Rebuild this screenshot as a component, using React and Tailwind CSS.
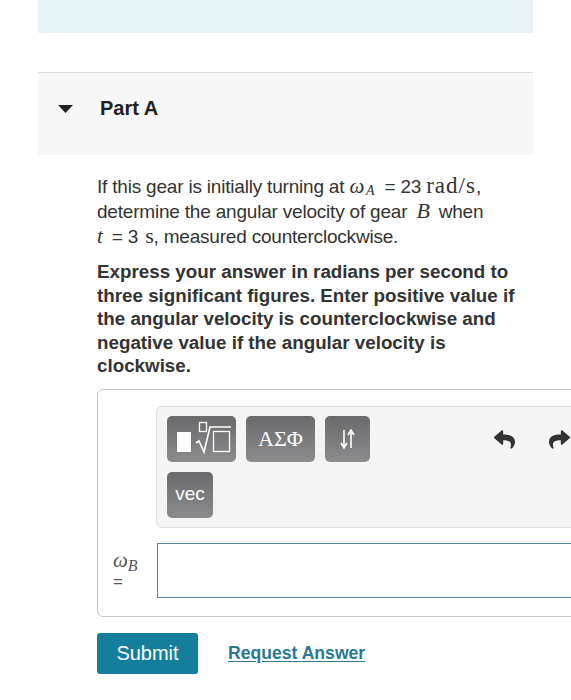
import { FaReply, FaShare } from 'react-icons/fa'

const serif = { fontFamily: '"Liberation Serif", "DejaVu Serif", serif' }

function RootIcon() {
  return (
    <svg width="69" height="46" viewBox="0 0 69 46">
      <rect x="10" y="16" width="14" height="20" fill="#fff" />
      <rect x="32.5" y="6.5" width="7" height="9" fill="none" stroke="#fff" strokeWidth="1.3" />
      <path d="M29 27 L32 25 L37 36 L43 11 L64 11" fill="none" stroke="#fff" strokeWidth="1.6" />
      <rect x="46.5" y="15.5" width="16" height="20" fill="none" stroke="#fff" strokeWidth="1.3" />
    </svg>
  )
}

function SwapIcon() {
  return (
    <svg width="16" height="24" viewBox="0 0 16 24">
      <path d="M4 3 L4 20 M1 16 L4 21 L7 16" fill="none" stroke="#fff" strokeWidth="1.6" />
      <path d="M11 21 L11 4 M8 8 L11 3 L14 8" fill="none" stroke="#fff" strokeWidth="1.6" />
    </svg>
  )
}

function ToolButton({ className, children }) {
  return (
    <div
      className={`flex h-[46px] items-center justify-center rounded-[5px] bg-gradient-to-b from-[#6a6a6c] to-[#8c8c8f] text-white ${className}`}
    >
      {children}
    </div>
  )
}

export default function App() {
  return (
    <div className="w-[571px] h-[700px] overflow-hidden bg-white text-[#333]" style={{ fontFamily: '"Liberation Sans", Arial, sans-serif' }}>
      <div className="ml-[38px] w-[495px]">
        <div className="h-[33px] bg-[#e6f4f5]" />
        <div className="mt-[39px] flex h-[83px] items-start border-t border-[#dedede] bg-[#f7f7f7] pt-[22px]">
          <svg width="15" height="8" viewBox="0 0 15 8" className="ml-[20px] mt-[10px]">
            <path d="M0 0 L15 0 L7.5 8 Z" fill="#222" />
          </svg>
          <span className="ml-[27px] text-[20px] font-bold leading-[26px] text-[#222]">Part A</span>
        </div>
      </div>

      <div className="ml-[97px] w-[450px] pt-[19px]">
        <p className="text-[19px] leading-[24px] tracking-[-0.2px]">
          If this gear is initially turning at{' '}
          <span style={serif} className="text-[21px]">
            <i>ω</i>
            <sub className="ml-[2px] mr-[10px] text-[14px] italic relative top-[2px]">A</sub>
          </span>
          = 23 <span style={serif} className="text-[23px] tracking-[1px]">rad/s</span>,
          <br />
          determine the angular velocity of gear{' '}
          <i style={serif} className="mx-[4px] text-[22px]">B</i> when
          <br />
          <i style={serif} className="mr-[4px] text-[21px]">t</i> = 3 <span style={serif} className="ml-[2px] text-[22px]">s</span>, measured counterclockwise.
        </p>
        <p className="mt-[11px] w-[430px] text-[18.8px] font-bold leading-[23.5px]">
          Express your answer in radians per second to three significant figures. Enter positive value if
          the angular velocity is counterclockwise and negative value if the angular velocity is clockwise.
        </p>
      </div>

      <div className="ml-[97px] mt-[11px] w-[520px] rounded-[6px] border border-[#c8c8c8] pb-[18px] pt-[16px]">
        <div className="ml-[58px] w-[440px] rounded-[6px] border border-[#dddddd] bg-[#f4f4f4] px-[10px] py-[9px]">
          <div className="flex">
            <div className="flex flex-col gap-[10px]">
              <div className="flex gap-[10px]">
                <ToolButton className="w-[69px]">
                  <RootIcon />
                </ToolButton>
                <ToolButton className="w-[69px]">
                  <span style={serif} className="text-[22px]">ΑΣΦ</span>
                </ToolButton>
                <ToolButton className="w-[45px]">
                  <SwapIcon />
                </ToolButton>
              </div>
              <ToolButton className="w-[46px]">
                <span className="text-[19px]">vec</span>
              </ToolButton>
            </div>
            <div className="ml-[124px] mt-[13px] flex gap-[34px] text-[#333]">
              <FaReply size={21} />
              <FaShare size={21} />
            </div>
          </div>
        </div>
        <div className="mt-[15px] flex">
          <div className="ml-[15px] w-[44px] pt-[6px] leading-[22px] text-[#555]">
            <div style={serif} className="text-[21px]">
              <i>ω</i>
              <sub className="text-[16px] italic">B</sub>
            </div>
            <div className="text-[17px]">=</div>
          </div>
          <div className="h-[55px] w-[440px] border border-[#5b8aa8] bg-white" />
        </div>
      </div>

      <div className="ml-[97px] mt-[16px] flex items-center">
        <div className="flex h-[41px] w-[101px] items-center justify-center rounded-[3px] bg-[#147f9c] text-[20px] text-white">
          Submit
        </div>
        <span className="ml-[30px] text-[17.6px] font-bold text-[#2a7896] underline underline-offset-2">Request Answer</span>
      </div>
    </div>
  )
}
